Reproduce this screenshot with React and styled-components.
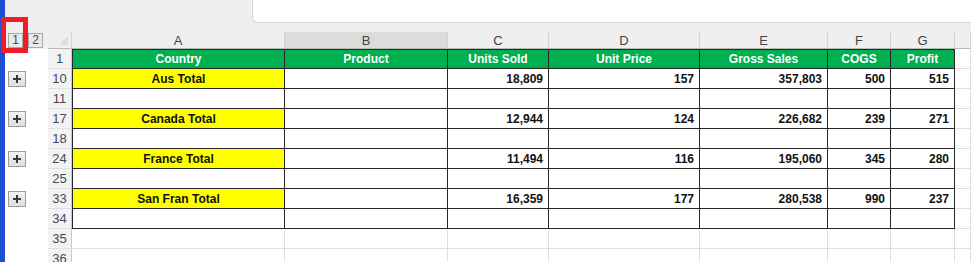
import React from "react";
import { styled, createGlobalStyle } from "styled-components";

const GlobalStyle = createGlobalStyle`
  html, body {
    margin: 0;
    padding: 0;
    background: #ffffff;
    overflow: hidden;
  }
`;

const Page = styled.div`
  position: relative;
  display: flex;
  width: 971px;
  height: 262px;
  overflow: hidden;
  font-family: "Liberation Sans", Arial, sans-serif;
`;

const BlueBar = styled.div`
  width: 5px;
  flex-shrink: 0;
  background: #1d4ed6;
`;

const Main = styled.div`
  flex: 1;
  display: flex;
  flex-direction: column;
  min-width: 0;
`;

const TopBar = styled.div`
  height: 32px;
  flex-shrink: 0;
  background: #efefef;
  display: flex;
`;

const FormulaBox = styled.div`
  margin-left: 247px;
  flex: 1;
  height: 22px;
  background: #ffffff;
  border-left: 1px solid #d6d6d6;
  border-bottom: 1px solid #d6d6d6;
  border-bottom-left-radius: 6px;
`;

const Sheet = styled.div`
  display: grid;
  grid-template-columns: 43px 24px 213px 163px 101px 151px 128px 63px 64px 1fr;
  grid-template-rows: 17px;
  grid-auto-rows: 20px;
`;

const OutlineHead = styled.div`
  background: #efefef;
  display: flex;
  align-items: center;
  gap: 5px;
  padding-left: 3px;
`;

const LevelButton = styled.div`
  width: 13px;
  height: 13px;
  border: 1px solid #a9a9a9;
  background: #e9e9e9;
  color: #4a4a4a;
  font-size: 12px;
  line-height: 13px;
  text-align: center;
`;

const OutlineCell = styled.div`
  background: #ffffff;
  display: flex;
  align-items: center;
  padding-left: 3px;
`;

const PlusButton = styled.div`
  width: 16px;
  height: 14px;
  border: 1px solid #9c9c9c;
  background: linear-gradient(#f2f2f2, #e0e0e0);
  display: flex;
  align-items: center;
  justify-content: center;
`;

const Corner = styled.div`
  background: #efefef;
  border-right: 1px solid #d4d4d4;
  border-bottom: 1px solid #b9b9b9;
  position: relative;
  &::after {
    content: "";
    position: absolute;
    right: 3px;
    bottom: 3px;
    border-style: solid;
    border-width: 0 0 9px 9px;
    border-color: transparent transparent #dcdcdc transparent;
  }
`;

const ColHead = styled.div`
  background: ${(p) => (p.$active ? "#dcdcdc" : "#efefef")};
  border-right: 1px solid #d4d4d4;
  border-bottom: 1px solid #b9b9b9;
  color: #444444;
  font-size: 13px;
  display: flex;
  align-items: center;
  justify-content: center;
`;

const RowHead = styled.div`
  background: #f3f3f3;
  border-right: 1px solid #c9c9c9;
  border-bottom: 1px solid #e0e0e0;
  color: #3f4a5a;
  font-size: 13px;
  display: flex;
  align-items: center;
  justify-content: center;
`;

const Cell = styled.div`
  box-sizing: border-box;
  background: ${(p) =>
    p.$kind === "head" ? "#00b050" : p.$kind === "total" ? "#ffff00" : "#ffffff"};
  color: ${(p) => (p.$kind === "head" ? "#ffffff" : "#111111")};
  border-right: 1px solid ${(p) => (p.$table ? "#262626" : "#dedede")};
  border-bottom: 1px solid ${(p) => (p.$table ? "#262626" : "#dedede")};
  border-left: ${(p) => (p.$first ? "1px solid #262626" : "none")};
  border-top: ${(p) => (p.$top ? "1px solid #262626" : "none")};
  font-size: 12px;
  font-weight: bold;
  display: flex;
  align-items: center;
  justify-content: ${(p) => (p.$right ? "flex-end" : "center")};
  padding-right: ${(p) => (p.$right ? "5px" : "0")};
  white-space: nowrap;
  overflow: hidden;
`;

const RedFrame = styled.div`
  position: absolute;
  left: 1px;
  top: 17px;
  width: 17px;
  height: 26px;
  border: 5px solid #ee1d23;
`;

const letters = ["A", "B", "C", "D", "E", "F", "G"];
const headers = ["Country", "Product", "Units Sold", "Unit Price", "Gross Sales", "COGS", "Profit"];

const rows = [
  { n: 1, head: true },
  { n: 10, total: "Aus Total", vals: ["18,809", "157", "357,803", "500", "515"] },
  { n: 11 },
  { n: 17, total: "Canada Total", vals: ["12,944", "124", "226,682", "239", "271"] },
  { n: 18 },
  { n: 24, total: "France Total", vals: ["11,494", "116", "195,060", "345", "280"] },
  { n: 25 },
  { n: 33, total: "San Fran Total", vals: ["16,359", "177", "280,538", "990", "237"] },
  { n: 34 },
  { n: 35, outside: true },
  { n: 36, outside: true },
];

function Plus() {
  return (
    <svg width="10" height="10" viewBox="0 0 10 10">
      <path d="M5 1v8M1 5h8" stroke="#3a3a3a" strokeWidth="2" />
    </svg>
  );
}

function renderRow(row) {
  const cells = [];
  for (let i = 0; i < 7; i++) {
    let text = "";
    let kind = "empty";
    let right = false;
    if (row.head) {
      text = headers[i];
      kind = "head";
    } else if (row.total) {
      if (i === 0) {
        text = row.total;
        kind = "total";
      } else if (i >= 2) {
        text = row.vals[i - 2];
        right = true;
      }
    }
    cells.push(
      <Cell
        key={i}
        $kind={kind}
        $right={right}
        $table={!row.outside}
        $first={i === 0 && !row.outside}
        $top={row.head}
      >
        {text}
      </Cell>
    );
  }
  return cells;
}

export default function App() {
  return (
    <>
      <GlobalStyle />
      <Page>
        <BlueBar />
        <Main>
          <TopBar>
            <FormulaBox />
          </TopBar>
          <Sheet>
            <OutlineHead>
              <LevelButton>1</LevelButton>
              <LevelButton>2</LevelButton>
            </OutlineHead>
            <Corner />
            {letters.map((l) => (
              <ColHead key={l} $active={l === "B"}>
                {l}
              </ColHead>
            ))}
            <ColHead />
            {rows.map((row) => (
              <React.Fragment key={row.n}>
                <OutlineCell>
                  {row.total && (
                    <PlusButton>
                      <Plus />
                    </PlusButton>
                  )}
                </OutlineCell>
                <RowHead>{row.n}</RowHead>
                {renderRow(row)}
                <Cell $kind="empty" />
              </React.Fragment>
            ))}
          </Sheet>
        </Main>
        <RedFrame />
      </Page>
    </>
  );
}
